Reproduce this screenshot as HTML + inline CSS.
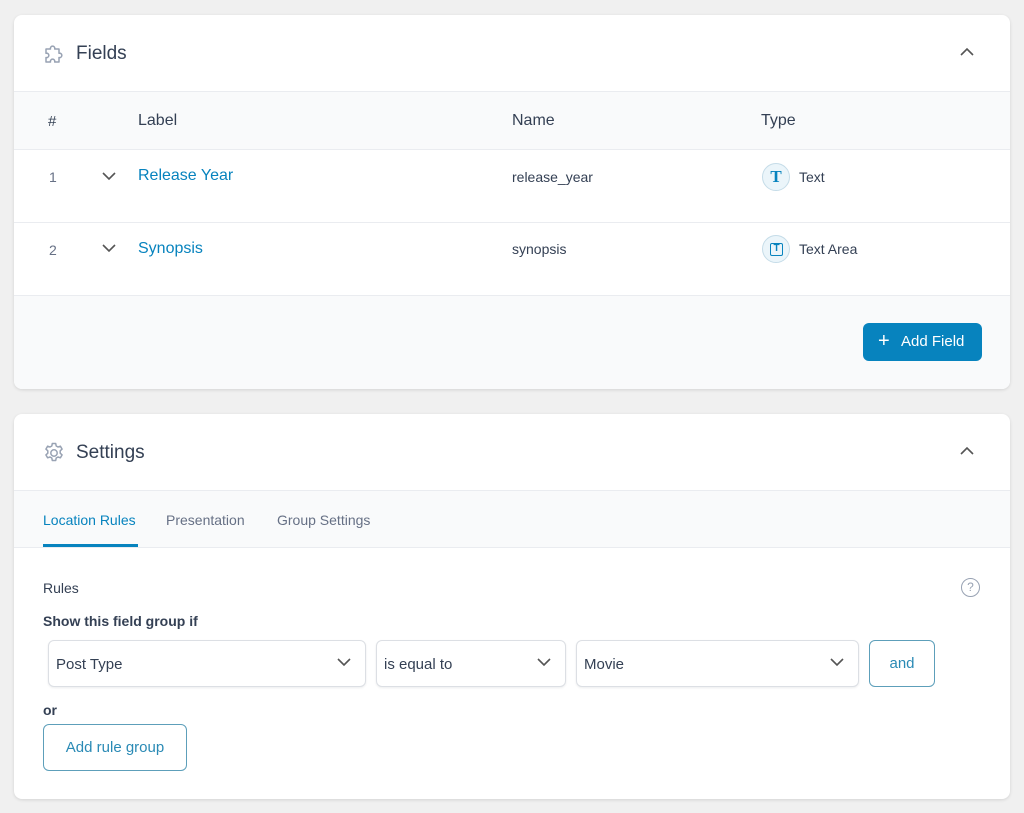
<!DOCTYPE html>
<html><head><meta charset="utf-8"><style>
*{box-sizing:border-box;margin:0;padding:0}
body{width:1024px;height:813px;background:#f0f0f0;font-family:"Liberation Sans",sans-serif;color:#344054;position:relative;overflow:hidden}
.card{position:absolute;left:14px;width:996px;background:#fff;border-radius:8px;box-shadow:0 1px 3px rgba(0,0,0,.12);overflow:hidden}
.hdr{height:77px;position:relative;border-bottom:1px solid #eaecf0}
.hdr .t{position:absolute;left:62px;top:28px;font-size:19px;color:#344054}
.hdr svg.ic{position:absolute;left:28px;top:27px}
.hdr .car{position:absolute;right:36px;top:32px}
.abs{position:absolute}
.gray{background:#f9fafb}
.sel{position:absolute;top:640px;height:47px;border:1px solid #dcdfe4;border-radius:6px;box-shadow:0 1px 2px rgba(16,24,40,.08);font-size:15px;padding:15px 7px;color:#344054;background:#fff}
.sel svg{position:absolute;right:14px;top:17px}
.btno{position:absolute;border:1px solid #5d9fba;border-radius:6px;color:#2a8ab5;font-size:15px;text-align:center}
</style></head><body>

<div class="card" style="top:15px;height:374px">
 <div class="hdr">
  <svg class="ic" width="24" height="24" viewBox="0 0 24 24" fill="none" stroke="#98a2b3" stroke-width="1.5" stroke-linejoin="round"><path d="M4 7h4.5a2.2 2.2 0 1 1 4.2 0H17v4.3a2.2 2.2 0 1 1 0 4.2V20h-4.3a2.2 2.2 0 1 0-4.2 0H4v-4.5a2.2 2.2 0 1 0 0-4.2z"/></svg>
  <div class="t">Fields</div>
  <svg class="car" width="14" height="9" viewBox="0 0 14 9"><path d="M1 8l6-6 6 6" stroke="#555" stroke-width="1.6" fill="none"/></svg>
 </div>
 <div class="abs gray" style="left:0;top:77px;width:996px;height:58px;border-bottom:1px solid #eaecf0">
  <div class="abs" style="left:34px;top:21px;font-size:15px">#</div>
  <div class="abs" style="left:124px;top:20px;font-size:16px">Label</div>
  <div class="abs" style="left:498px;top:20px;font-size:16px">Name</div>
  <div class="abs" style="left:747px;top:20px;font-size:16px">Type</div>
 </div>
 <div class="abs" style="left:0;top:136px;width:996px;height:72px;border-bottom:1px solid #eaecf0">
  <div class="abs" style="left:35px;top:18px;font-size:14px;color:#667085">1</div>
  <svg class="abs" style="left:88px;top:21px" width="14" height="9" viewBox="0 0 14 9"><path d="M1 1l6 6 6-6" stroke="#555" stroke-width="1.6" fill="none"/></svg>
  <div class="abs" style="left:124px;top:16px;font-size:16px;color:#0783be">Release Year</div>
  <div class="abs" style="left:498px;top:18px;font-size:14px">release_year</div>
  <div class="abs" style="left:748px;top:12px;width:28px;height:28px;border-radius:50%;background:#ebf5fa;border:1px solid #c5dce8;text-align:center;font:bold 17px 'Liberation Serif',serif;color:#0783be;line-height:26px">T</div>
  <div class="abs" style="left:785px;top:18px;font-size:14px">Text</div>
 </div>
 <div class="abs" style="left:0;top:208px;width:996px;height:73px;border-bottom:1px solid #eaecf0">
  <div class="abs" style="left:35px;top:19px;font-size:14px;color:#667085">2</div>
  <svg class="abs" style="left:88px;top:21px" width="14" height="9" viewBox="0 0 14 9"><path d="M1 1l6 6 6-6" stroke="#555" stroke-width="1.6" fill="none"/></svg>
  <div class="abs" style="left:124px;top:17px;font-size:16px;color:#0783be">Synopsis</div>
  <div class="abs" style="left:498px;top:18px;font-size:14px">synopsis</div>
  <div class="abs" style="left:748px;top:12px;width:28px;height:28px;border-radius:50%;background:#ebf5fa;border:1px solid #c5dce8"><div style="position:absolute;left:7px;top:7px;width:13px;height:13px;border:1.6px solid #0783be;border-radius:2px;font:bold 10px 'Liberation Sans',sans-serif;color:#0783be;text-align:center;line-height:10px">T</div></div>
  <div class="abs" style="left:785px;top:18px;font-size:14px">Text Area</div>
 </div>
 <div class="abs gray" style="left:0;top:281px;width:996px;height:93px"></div>
 <div class="abs" style="left:849px;top:308px;width:119px;height:38px;background:#0783be;border-radius:6px;color:#fff;font-size:15px;line-height:38px;padding-left:38px">Add Field</div>
 <div class="abs" style="left:864px;top:318px;color:#fff;font-size:20px;line-height:16px">+</div>
</div>

<div class="card" style="top:414px;height:385px">
 <div class="hdr">
  <svg class="ic" width="24" height="24" viewBox="0 0 24 24" fill="none" stroke="#98a2b3" stroke-width="1.5"><circle cx="12" cy="12" r="3.2"/><path d="M10.3 2.5h3.4l.5 2.5 1.8 1 2.4-.8 1.7 2.9-1.9 1.7v2.4l1.9 1.7-1.7 2.9-2.4-.8-1.8 1-.5 2.5h-3.4l-.5-2.5-1.8-1-2.4.8-1.7-2.9 1.9-1.7v-2.4L3.9 8.1l1.7-2.9 2.4.8 1.8-1z" stroke-linejoin="round"/></svg>
  <div class="t" style="top:28px">Settings</div>
  <svg class="car" width="14" height="9" viewBox="0 0 14 9"><path d="M1 8l6-6 6 6" stroke="#555" stroke-width="1.6" fill="none"/></svg>
 </div>
 <div class="abs gray" style="left:0;top:77px;width:996px;height:57px;border-bottom:1px solid #eaecf0">
  <div class="abs" style="left:29px;top:21px;font-size:14px;color:#0783be">Location Rules</div>
  <div class="abs" style="left:29px;top:53px;width:95px;height:3px;background:#0783be"></div>
  <div class="abs" style="left:152px;top:21px;font-size:14px;color:#667085">Presentation</div>
  <div class="abs" style="left:263px;top:21px;font-size:14px;color:#667085">Group Settings</div>
 </div>
 <div class="abs" style="left:29px;top:166px;font-size:14px">Rules</div>
 <div class="abs" style="left:947px;top:164px;width:19px;height:19px;border:1.5px solid #98a2b3;border-radius:50%;text-align:center;font-size:12px;line-height:16px;color:#98a2b3">?</div>
 <div class="abs" style="left:29px;top:199px;font-size:14px;font-weight:bold;color:#344054">Show this field group if</div>
 <div class="abs" style="left:29px;top:288px;font-size:14px;font-weight:bold">or</div>
</div>
<div class="sel" style="left:48px;width:318px">Post Type<svg width="14" height="9" viewBox="0 0 14 9"><path d="M1 1l6 6 6-6" stroke="#555" stroke-width="1.6" fill="none"/></svg></div>
<div class="sel" style="left:376px;width:190px">is equal to<svg width="14" height="9" viewBox="0 0 14 9"><path d="M1 1l6 6 6-6" stroke="#555" stroke-width="1.6" fill="none"/></svg></div>
<div class="sel" style="left:576px;width:283px">Movie<svg width="14" height="9" viewBox="0 0 14 9"><path d="M1 1l6 6 6-6" stroke="#555" stroke-width="1.6" fill="none"/></svg></div>
<div class="btno" style="left:869px;top:640px;width:66px;height:47px;line-height:45px">and</div>
<div class="btno" style="left:43px;top:724px;width:144px;height:47px;line-height:45px">Add rule group</div>
</body></html>
